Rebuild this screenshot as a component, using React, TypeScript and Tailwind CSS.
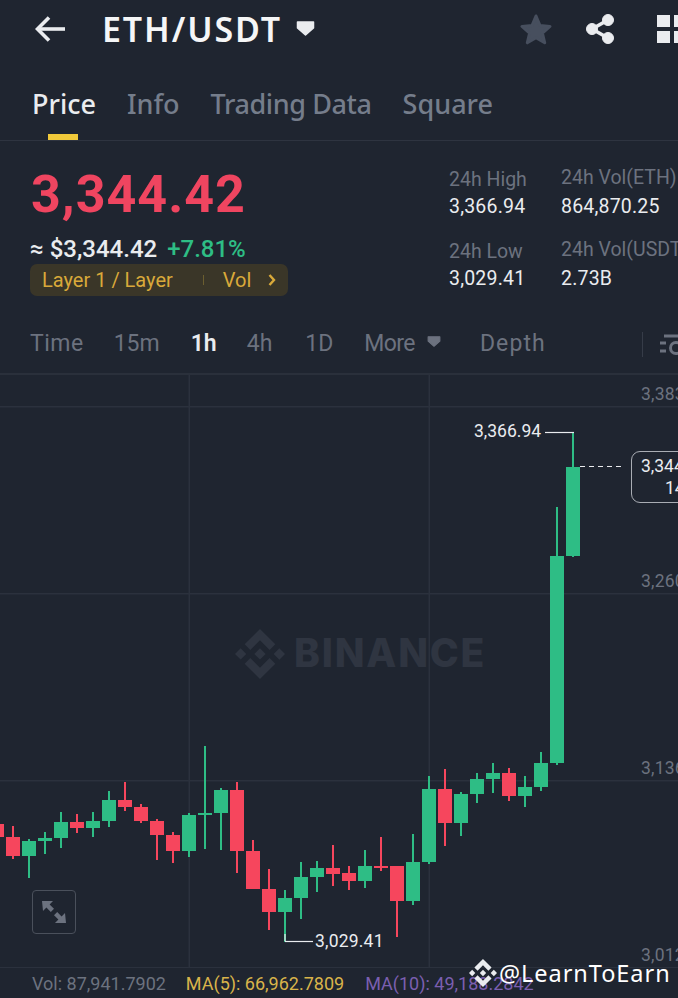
import { SiBinance } from "react-icons/si";

type Candle = [number, number, number, number, number, "g" | "r"];

// x, wick top, wick bottom, body top, body bottom, colour
const candles: Candle[] = [
  [-3, 818, 840, 824, 837, "r"],
  [13, 826, 859, 837, 856, "r"],
  [29, 839, 878, 841, 856, "g"],
  [45, 832, 854, 838, 841, "g"],
  [61, 812, 848, 822, 838, "g"],
  [77, 814, 833, 822, 828, "r"],
  [93, 812, 837, 821, 828, "g"],
  [109, 791, 827, 800, 821, "g"],
  [125, 782, 811, 800, 807, "r"],
  [141, 804, 823, 807, 821, "r"],
  [157, 819, 860, 821, 835, "r"],
  [173, 832, 863, 835, 851, "r"],
  [189, 813, 857, 815, 851, "g"],
  [205, 746, 849, 813, 815, "g"],
  [221, 788, 850, 790, 813, "g"],
  [237, 782, 873, 790, 851, "r"],
  [253, 840, 889, 851, 889, "r"],
  [269, 869, 930, 889, 912, "r"],
  [285, 890, 942, 898, 912, "g"],
  [301, 862, 919, 877, 898, "g"],
  [317, 861, 892, 868, 877, "g"],
  [333, 845, 886, 868, 874, "r"],
  [349, 866, 890, 873, 881, "r"],
  [365, 850, 888, 866, 881, "g"],
  [381, 837, 871, 866, 868, "r"],
  [397, 866, 937, 866, 901, "r"],
  [413, 834, 905, 862, 901, "g"],
  [429, 776, 864, 789, 862, "g"],
  [445, 769, 846, 789, 823, "r"],
  [461, 792, 836, 794, 823, "g"],
  [477, 773, 803, 779, 794, "g"],
  [493, 763, 793, 773, 779, "g"],
  [509, 768, 801, 773, 796, "r"],
  [525, 776, 807, 787, 796, "g"],
  [541, 752, 791, 763, 787, "g"],
  [557, 507, 765, 556, 763, "g"],
  [573, 432, 557, 467, 556, "g"],
];

const axis = [
  ["3,383.50", 400],
  ["3,260.10", 587],
  ["3,136.70", 774],
  ["3,012.90", 961],
] as const;

function Caret({ className }: { className: string }) {
  return (
    <svg viewBox="0 0 18 15" className={className} fill="currentColor" stroke="currentColor" strokeWidth="1.5" strokeLinejoin="round">
      <path d="M1 1H17V7L9 14L1 7Z" />
    </svg>
  );
}

function Stat({ label, value, valueClass }: { label: string; value: string; valueClass: string }) {
  return (
    <div className="flex flex-col whitespace-nowrap">
      <span className="text-[19.5px] leading-[24px] text-[#6c727f]">{label}</span>
      <span className={`text-[19.5px] leading-[24px] tracking-[0.2px] text-[#eaecef] ${valueClass}`}>{value}</span>
    </div>
  );
}

function Chart() {
  return (
    <div className="relative h-[595px] border-t-2 border-[#2a303b]">
      <svg viewBox="0 375 678 593" className="block w-[678px] h-[593px]">
        {[406, 593, 780, 967].map((y) => (
          <rect key={y} x="0" y={y} width="678" height="1.5" fill="#2b313d" />
        ))}
        {[188.5, 428.5].map((x) => (
          <rect key={x} x={x} y="375" width="1.5" height="593" fill="#2b313d" />
        ))}

        <text x="294" y="667" fontSize="39" fontWeight="800" letterSpacing="1.8" fontFamily="Inter, sans-serif" fill="#2f3541">
          BINANCE
        </text>
        <g transform="translate(235 629)" color="#2f3541">
          <SiBinance size={50} />
        </g>

        {axis.map(([t, y]) => (
          <text key={t} x="641" y={y} fontSize="17.5" fill="#6c727f" letterSpacing="0.2">
            {t}
          </text>
        ))}

        {candles.map(([x, wt, wb, bt, bb, c]) => {
          const fill = c === "g" ? "#2ebd85" : "#f6465d";
          return (
            <g key={x} fill={fill}>
              <rect x={x - 1} y={wt} width="2" height={wb - wt} />
              <rect x={x - 7} y={bt} width="14" height={Math.max(bb - bt, 2)} />
            </g>
          );
        })}

        {/* high / low callouts */}
        <path d="M545 432.5H574" stroke="#eaecef" strokeWidth="1.2" fill="none" />
        <text x="474" y="437" fontSize="17.5" fill="#eaecef">
          3,366.94
        </text>
        <path d="M285 941.5H313" stroke="#eaecef" strokeWidth="1.2" fill="none" />
        <path d="M285 934V941" stroke="#eaecef" strokeWidth="1.2" fill="none" />
        <text x="315" y="947" fontSize="17.5" letterSpacing="0.2" fill="#eaecef">
          3,029.41
        </text>

        {/* last price line */}
        <path d="M580 466.5H625" stroke="#eaecef" strokeWidth="1.2" strokeDasharray="5 4" fill="none" />
      </svg>

      {/* last price tag */}
      <div className="absolute left-[631px] top-[76px] w-[70px] h-[52px] rounded-[9px] border border-[#a9adb4] bg-[#1f2530] text-[#eaecef] text-[17.5px] leading-[22px] pt-[3px] pl-[9px] whitespace-nowrap">
        <div>3,344.42</div>
        <div className="pl-[24px]">14:22</div>
      </div>

      {/* expand button */}
      <div className="absolute left-[32px] top-[515px] w-[44px] h-[44px] rounded-[4px] border border-[#4a505b] flex items-center justify-center">
        <svg viewBox="0 0 26 26" className="w-[26px] h-[26px]" fill="#6c727f">
          <path d="M1 2h11l-3.4 3.4 4.4 4.4-3.2 3.2-4.4-4.4L2 12z" />
          <path d="M25 24H14l3.4-3.4-4.4-4.4 3.2-3.2 4.4 4.4L24 14z" />
        </svg>
      </div>
    </div>
  );
}

export default function App() {
  return (
    <div className="relative w-[678px] h-[998px] overflow-hidden bg-[#1f2530] font-[Roboto,sans-serif]">
      {/* top bar */}
      <div className="flex items-center h-[58px] pl-[35px] text-white">
        <svg viewBox="0 0 30 30" className="shrink-0 w-[30px] h-[30px]" fill="none" stroke="#eaecef" strokeWidth="3.6">
          <path d="M30 15H3" />
          <path d="M14 3.5L2.5 15L14 26.5" />
        </svg>
        <span className="ml-[37px] text-[34px] font-semibold tracking-[1.9px] font-['Noto_Sans',sans-serif] text-[#f5f6f7]">ETH/USDT</span>
        <Caret className="shrink-0 ml-[14px] mb-[2px] w-[19px] h-[15px] text-[#eaecef]" />
        <div className="ml-auto flex items-center mr-[-9px]">
          <svg viewBox="0 0 32 31" className="w-[32px] h-[31px]" fill="#474f5e" stroke="#474f5e" strokeWidth="3" strokeLinejoin="round">
            <path d="M16 2l4 9.5 10 .9-7.6 6.6 2.3 9.8L16 23.6 7.3 28.8 9.6 19 2 12.4l10-.9z" />
          </svg>
          <svg viewBox="0 0 30 30" className="ml-[33px] w-[30px] h-[30px]" fill="#eaecef" stroke="#eaecef">
            <circle cx="23" cy="6" r="5.5" />
            <circle cx="7" cy="15" r="5.5" />
            <circle cx="23" cy="24" r="5.5" />
            <path d="M23 6L7 15L23 24" fill="none" strokeWidth="3.6" />
          </svg>
          <div className="ml-[42px] grid grid-cols-2 gap-[4px] w-[30px]">
            <div className="h-[12px] bg-[#eaecef]" />
            <div className="h-[12px] bg-[#eaecef]" />
            <div className="h-[12px] bg-[#eaecef]" />
            <div className="h-[12px] bg-[#eaecef]" />
          </div>
        </div>
      </div>

      {/* tabs */}
      <div className="flex h-[83px] pl-[32px] pt-[26px] gap-[31px] border-b border-[#2e3440] font-['Noto_Sans',sans-serif] text-[27px] leading-[40px] font-medium text-[#757d8b]">
        <div className="relative text-[#eaecef]">
          Price
          <div className="absolute left-[16px] top-[50px] w-[30px] h-[6px] bg-[#f0c93a]" />
        </div>
        <div>Info</div>
        <div className="tracking-[-0.4px]">Trading Data</div>
        <div>Square</div>
      </div>

      {/* price and stats */}
      <div className="flex h-[178px]">
        <div className="shrink-0 w-[449px] pl-[30px] pt-[24px]">
          <div className="ml-[1px] text-[52px] leading-[60px] font-bold text-[#ef4560] tracking-[1px]">3,344.42</div>
          <div className="flex items-baseline mt-[9px] text-[24px] leading-[30px] font-medium">
            <span className="text-[#eaecef]">≈ $3,344.42</span>
            <span className="ml-[10px] text-[#2ebd85]">+7.81%</span>
          </div>
          <div className="flex items-center w-[258px] h-[32px] rounded-[7px] bg-[#3a3628] pl-[12px] text-[20px] text-[#d9a93a]">
            <span>Layer 1 / Layer</span>
            <span className="ml-[30px] w-px h-[10px] bg-[#6b5e2f]" />
            <span className="ml-[19px]">Vol</span>
            <svg viewBox="0 0 8 12" className="ml-[17px] w-[8px] h-[12px]" fill="none" stroke="#d9a93a" strokeWidth="2.4">
              <path d="M1.5 1L6 6L1.5 11" />
            </svg>
          </div>
        </div>
        <div className="shrink-0 w-[112px] pt-[27px] flex flex-col gap-[21px]">
          <Stat label="24h High" value="3,366.94" valueClass="mt-[3px]" />
          <Stat label="24h Low" value="3,029.41" valueClass="mt-[3px]" />
        </div>
        <div className="pt-[25px] flex flex-col gap-[19px]">
          <Stat label="24h Vol(ETH)" value="864,870.25" valueClass="mt-[5px]" />
          <Stat label="24h Vol(USDT)" value="2.73B" valueClass="mt-[5px]" />
        </div>
      </div>

      {/* intervals */}
      <div className="flex items-center h-[54px] pb-[4px] pl-[30px] text-[23px] text-[#6c727f]">
        <span className="tracking-[0.5px]">Time</span>
        <span className="ml-[30px]">15m</span>
        <span className="ml-[31px] font-semibold text-[#eaecef]">1h</span>
        <span className="ml-[30px]">4h</span>
        <span className="ml-[33px]">1D</span>
        <span className="ml-[31px] tracking-[-0.6px]">More</span>
        <Caret className="shrink-0 ml-[12px] mb-[5px] w-[14px] h-[11px] text-[#6c727f]" />
        <span className="ml-[39px] tracking-[1.1px]">Depth</span>
        <div className="ml-auto flex items-center mr-[-4px]">
          <div className="w-px h-[25px] bg-[#363c48]" />
          <svg viewBox="0 0 22 22" className="ml-[17px] w-[22px] h-[22px]" fill="none" stroke="#6c727f" strokeWidth="3">
            <path d="M4 3H22" />
            <path d="M0 10H6" />
            <path d="M0 18H6" />
            <circle cx="16" cy="15" r="5.5" />
          </svg>
        </div>
      </div>

      <Chart />

      {/* legend */}
      <div className="flex items-center h-[30px] pl-[32px] text-[18px] whitespace-nowrap">
        <span className="text-[#6c727f]">Vol: 87,941.7902</span>
        <span className="ml-[20px] text-[#d9b44a]">MA(5): 66,962.7809</span>
        <span className="ml-[21px] text-[#7b5fb0]">MA(10): 49,188.2842</span>
      </div>

      {/* watermark */}
      <div className="absolute left-[469px] top-[958px] flex items-center text-white">
        <SiBinance size={28} className="text-[#eaecef]" />
        <span className="ml-[2px] text-[23.5px] leading-[30px] tracking-[0.95px] font-['Noto_Sans',sans-serif]">@LearnToEarn</span>
      </div>
    </div>
  );
}
